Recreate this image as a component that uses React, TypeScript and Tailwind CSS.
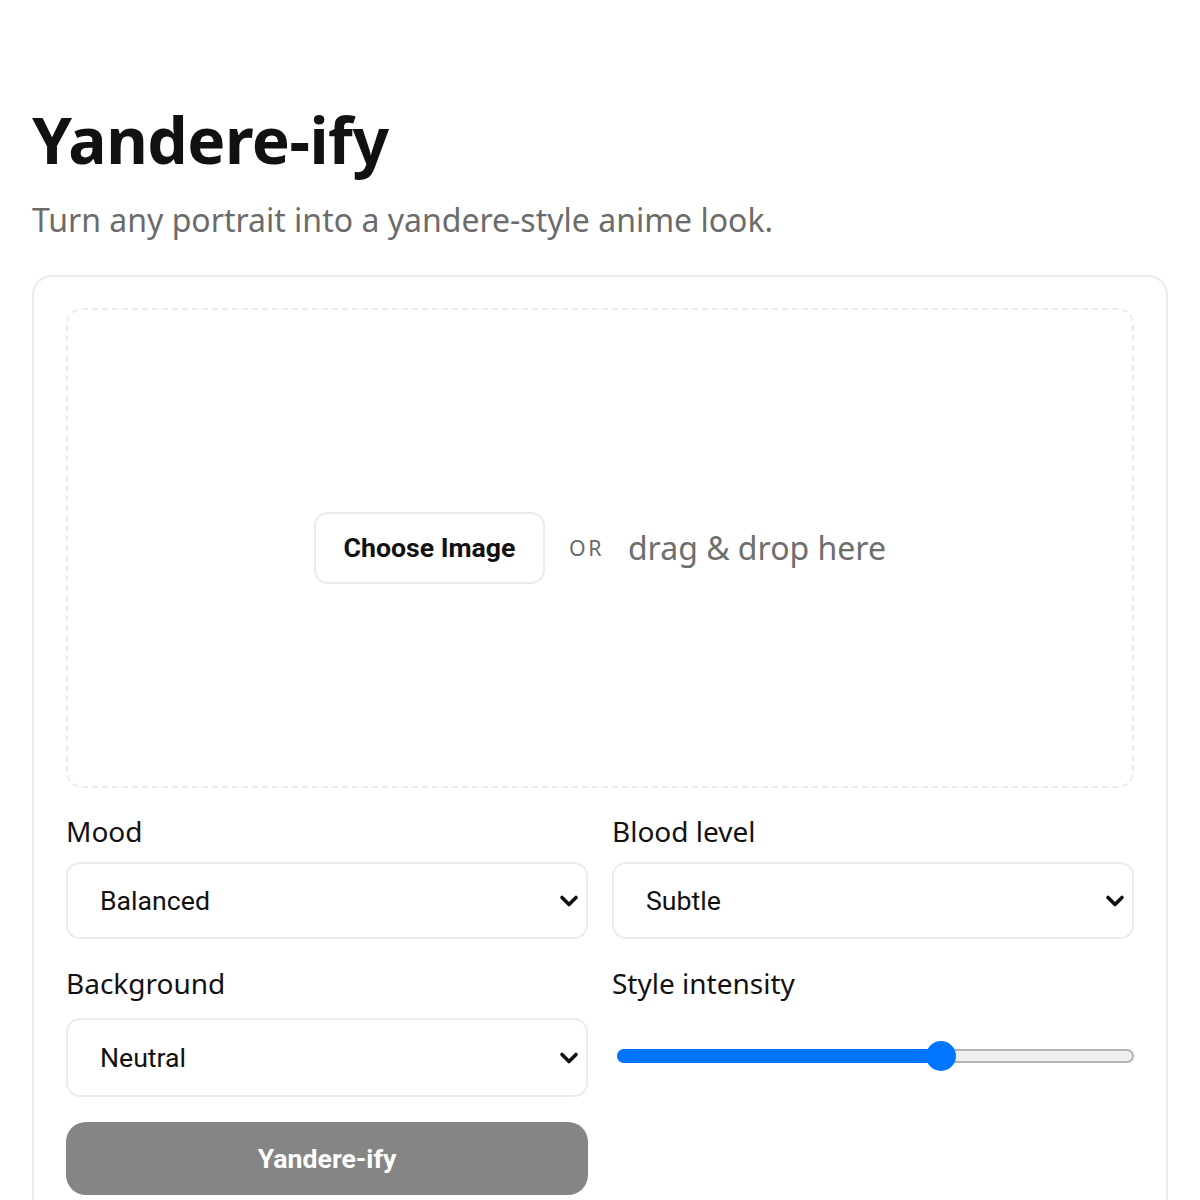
import React from "react";

function Chevron() {
  return (
    <svg width="20" height="14" viewBox="0 0 20 14" className="pointer-events-none absolute right-[7px] top-1/2 -translate-y-1/2">
      <path d="M3 3.5 L10 10.5 L17 3.5" fill="none" stroke="#111" strokeWidth="3.6" strokeLinecap="round" strokeLinejoin="round" />
    </svg>
  );
}

function Select({ value, h }: { value: string; h: string }) {
  return (
    <div className={`relative flex w-full items-center rounded-[14px] border-2 border-[#ececec] bg-white pl-[32px] ${h}`}>
      <span className="text-[26.67px] text-[#111]" style={{ fontFamily: "Roboto, 'Liberation Sans', sans-serif" }}>{value}</span>
      <Chevron />
    </div>
  );
}

export default function App() {
  const noto = { fontFamily: "'Noto Sans', 'Open Sans', sans-serif" };
  const roboto = { fontFamily: "Roboto, 'Liberation Sans', sans-serif" };
  const pct = 0.627;
  return (
    <div className="min-h-screen bg-white px-8 pt-[108px]" style={noto}>
      <h1 className="text-[64px] font-bold leading-none tracking-[-0.5px] text-[#111]">Yandere-ify</h1>
      <p className="mt-[26px] text-[32px] leading-[44px] text-[#6b6b6b]">Turn any portrait into a yandere-style anime look.</p>
      <div className="mt-[33px] rounded-[20px] border-2 border-[#ebebeb] p-8 pt-[31px]">
        <div className="flex h-[480px] items-center justify-center gap-6 rounded-[16px] border-2 border-dashed border-[#ebebeb]">
          <button className="h-[72px] w-[231px] rounded-[14px] border-2 border-[#ececec] bg-white text-[26.67px] font-bold text-[#111]" style={roboto}>
            Choose Image
          </button>
          <span className="text-[21.3px] tracking-[2.5px] text-[#6b6b6b]">OR</span>
          <span className="text-[32px] text-[#6e6e6e]">drag &amp; drop here</span>
        </div>
        <div className="mt-[22px] grid grid-cols-2 gap-x-6">
          <div className="flex flex-col">
            <label className="text-[28px] leading-[42px] text-[#111]">Mood</label>
            <div className="mt-[10px]">
              <Select value="Balanced" h="h-[77px]" />
            </div>
          </div>
          <div className="flex flex-col">
            <label className="text-[28px] leading-[42px] text-[#111]">Blood level</label>
            <div className="mt-[10px]">
              <Select value="Subtle" h="h-[77px]" />
            </div>
          </div>
          <div className="mt-[23px] flex flex-col">
            <label className="text-[28px] leading-[42px] text-[#111]">Background</label>
            <div className="mt-[14px]">
              <Select value="Neutral" h="h-[79px]" />
            </div>
          </div>
          <div className="mt-[23px] flex flex-col">
            <label className="text-[28px] leading-[42px] text-[#111]">Style intensity</label>
            <div className="mt-[14px] flex h-[79px] items-center pl-[5px]">
              <div className="relative -mt-[3px] h-[14px] w-full rounded-full border-2 border-[#b3b3b3] bg-[#efefef]">
                <div className="absolute -left-[2px] -top-[2px] h-[14px] rounded-full bg-[#0075ff]" style={{ width: `${pct * 100}%` }} />
                <div
                  className="absolute top-1/2 h-[30px] w-[30px] -translate-x-1/2 -translate-y-1/2 rounded-full bg-[#0075ff]"
                  style={{ left: `${pct * 100}%` }}
                />
              </div>
            </div>
          </div>
          <div className="mt-[25px]">
            <button className="h-[73px] w-full rounded-[20px] bg-[#858585] text-[26.67px] font-bold text-white" style={roboto}>
              Yandere-ify
            </button>
          </div>
        </div>
      </div>
    </div>
  );
}
